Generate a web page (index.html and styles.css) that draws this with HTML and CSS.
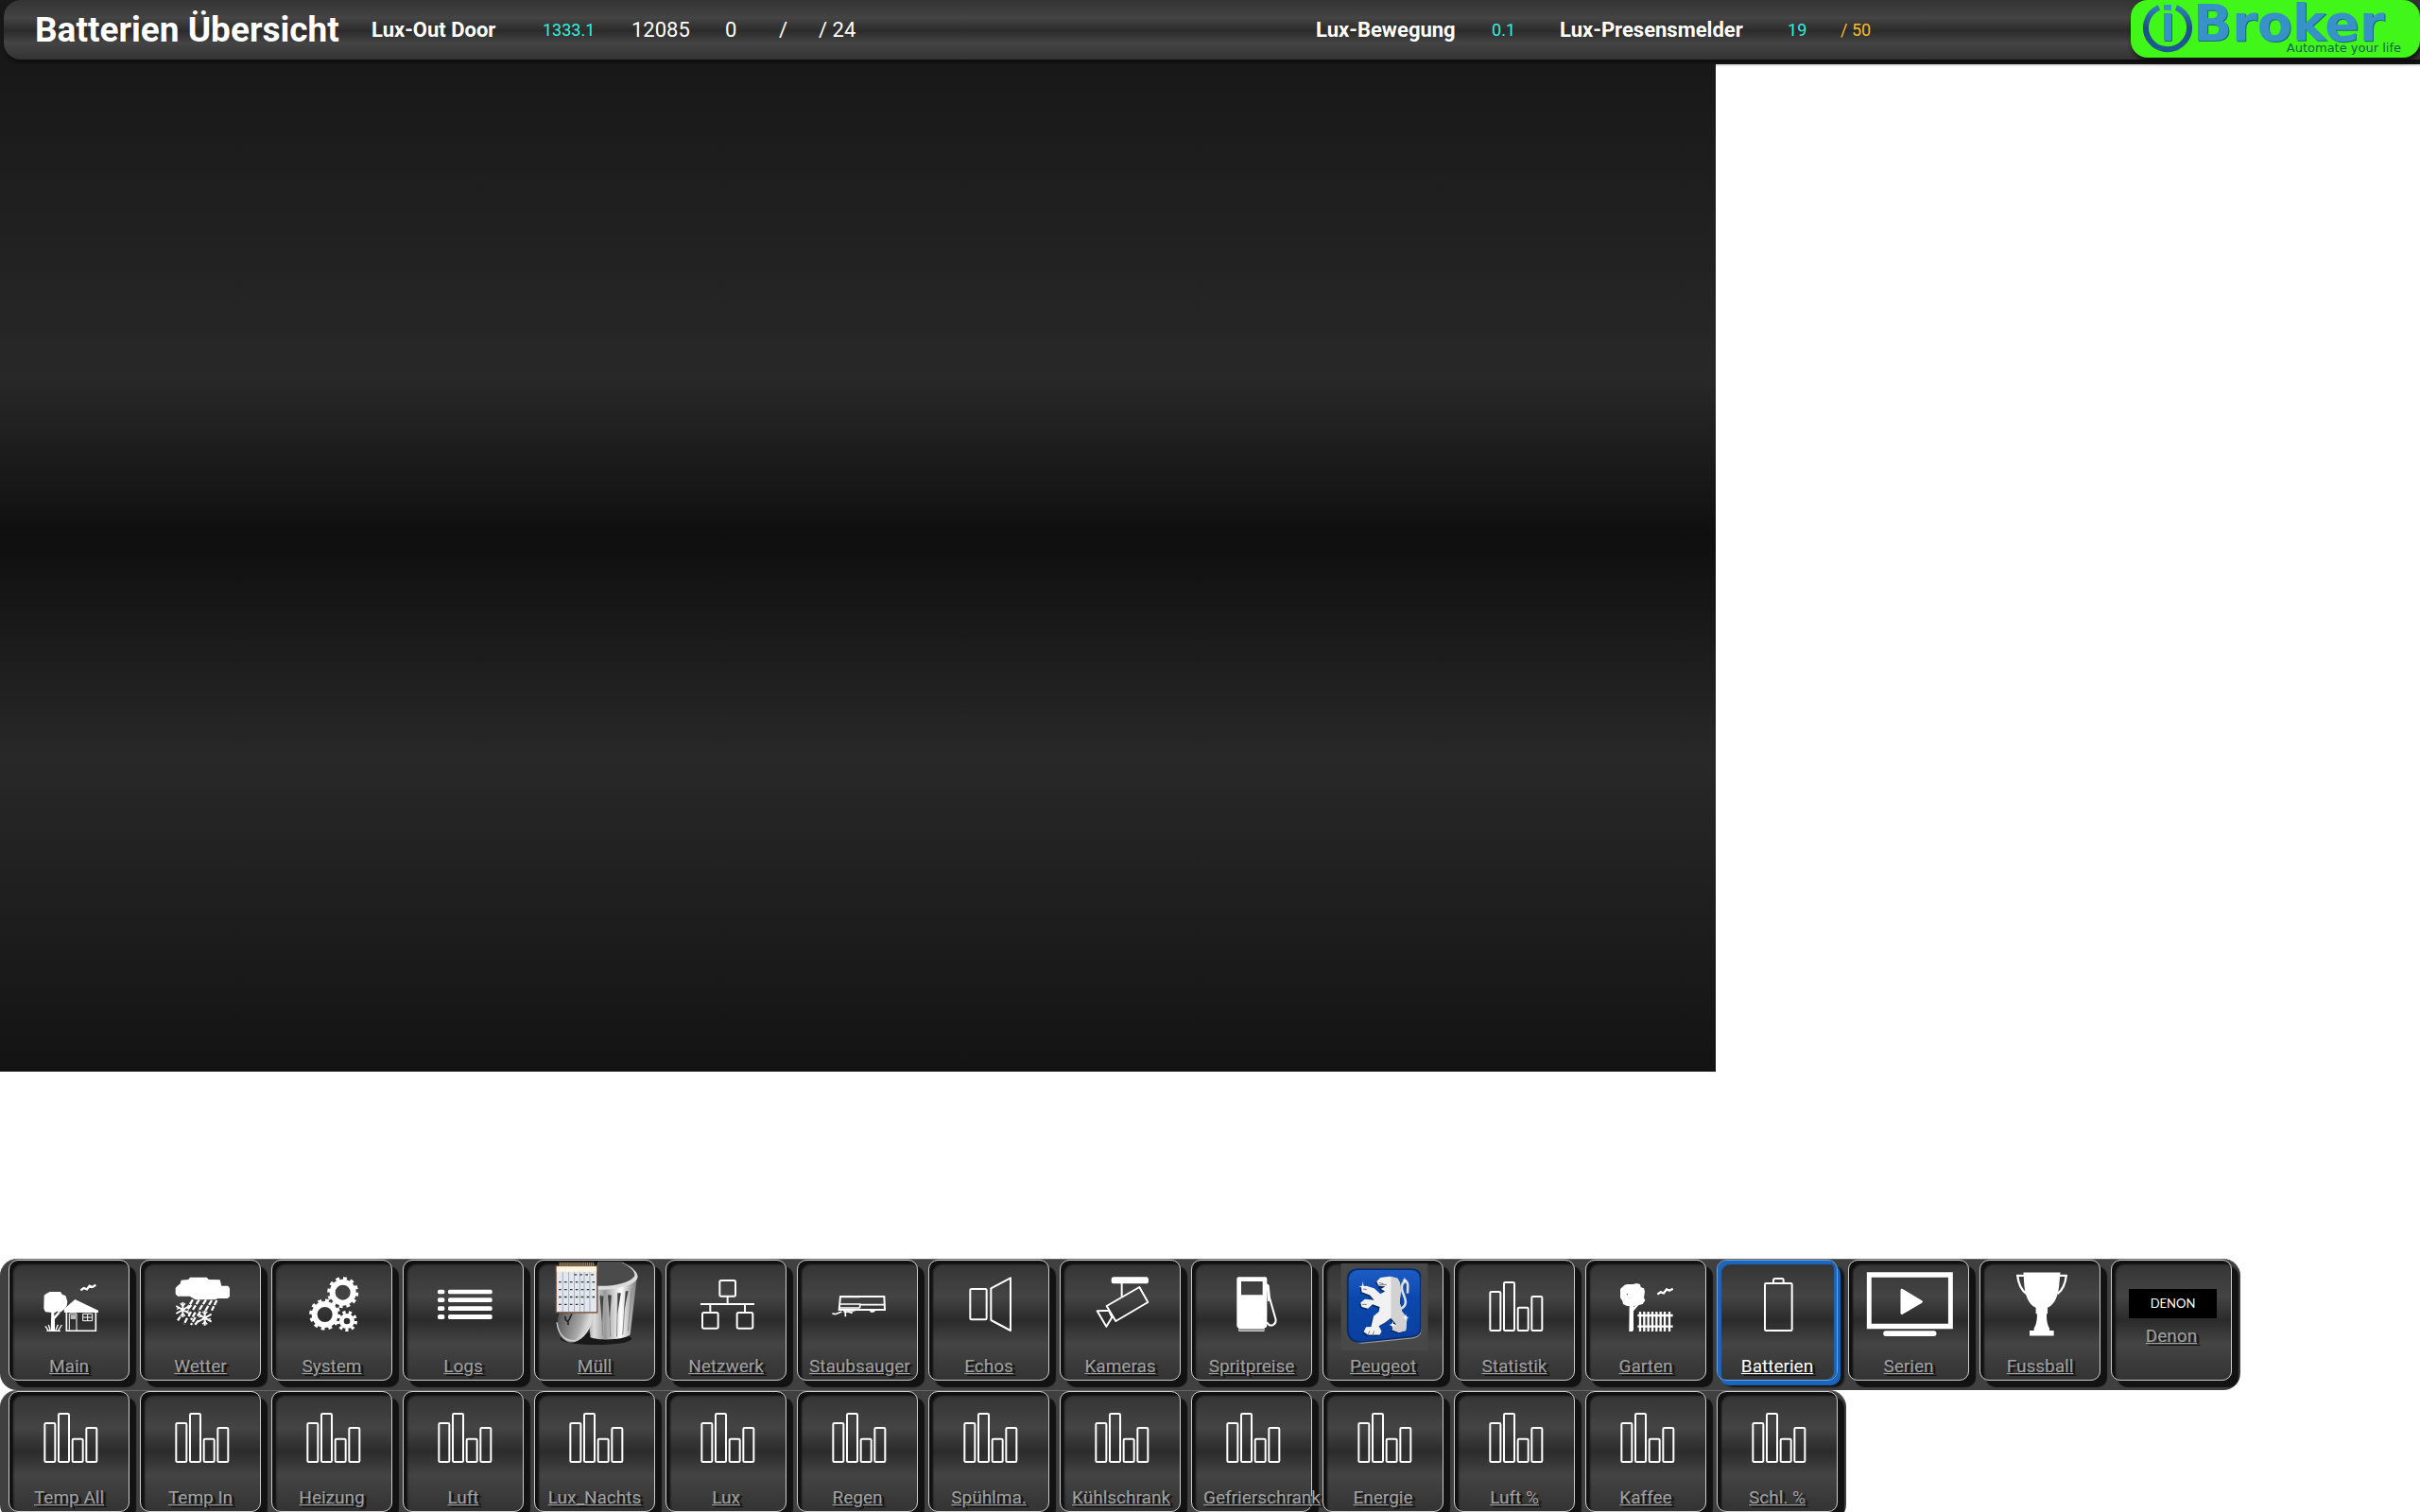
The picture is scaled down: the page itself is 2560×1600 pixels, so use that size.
FILE: index.html
```html
<!DOCTYPE html>
<html lang="de">
<head>
    <meta charset="UTF-8">
    <title>Batterien Übersicht</title>

    <link rel="stylesheet" href="styles.css">
</head>
<body>
    <svg class="symbols" aria-hidden="true">
        <symbol id="bars" viewBox="0 0 174 174">
            <g fill="none" stroke="#fff" stroke-width="6">
                <rect x="4" y="48" width="33" height="123" rx="4"/>
                <rect x="48" y="18" width="33" height="153" rx="4"/>
                <rect x="92" y="98" width="33" height="73" rx="4"/>
                <rect x="136" y="63" width="33" height="108" rx="4"/>
            </g>
        </symbol>
    </svg>

    <header class="header">
        <div class="header-bar">
            <h1>Batterien Übersicht</h1>
            <span class="name">Lux-Out Door</span>
            <span class="lcd">1333.1</span>
            <span>12085</span>
            <span>0</span>
            <span>/</span>
            <span>/ 24</span>
            <span class="name">Lux-Bewegung</span>
            <span class="lcd">0.1</span>
            <span class="name">Lux-Presensmelder</span>
            <span class="lcd">19</span>
            <span class="lcd limit">/ 50</span>
            <div class="logo">
                <svg viewBox="0 0 306 61">
                    <defs>
                        <linearGradient id="ring" x1="0" y1="0" x2="0" y2="1">
                            <stop offset="0" stop-color="#2f7fb5"/>
                            <stop offset="0.5" stop-color="#1d4f86"/>
                            <stop offset="1" stop-color="#1c5a94"/>
                        </linearGradient>
                    </defs>
                    <path d="M30 8A23 23 0 1 0 48 8" fill="none" stroke="url(#ring)" stroke-width="6"/>
                    <rect x="36" y="15" width="8" height="29" fill="#1d6a8e"/>
                    <rect x="35" y="14" width="8" height="29" fill="#3792c8"/>
                    <rect x="35" y="5" width="8" height="6" fill="#3792c8"/>
                    <text class="logo-name" x="66" y="43">Broker</text>
                    <text class="logo-claim" x="286" y="55" text-anchor="end">Automate your life</text>
                </svg>
            </div>
        </div>
    </header>

    <main class="panel"></main>

    <nav class="nav">
        <div class="nav-row">
            <a class="tile" href="#main">
                <svg class="icon" viewBox="138 93 174 174">
                    <g fill="#fff">
                        <path d="M148 146L158 141 192 141 198 150 208 153 214 172 212 186 204 196 194 205 181 203 174 208 144 205 139 195 140 152Z"/>
                        <path d="M163 200H172V218L186 203 192 206 174 228V266H161Z"/>
                        <path d="M203 196L238 165 312 200V207H204Z"/>
                    </g>
                    <path d="M211 204V265H304V204" fill="none" stroke="#fff" stroke-width="5"/>
                    <path d="M220 264V210H243V264M263 211H293V233H263ZM278 211V233M263 222H293" fill="none" stroke="#fff" stroke-width="3"/>
                    <path d="M224 214H240V228H224Z" fill="#bbb"/>
                    <path d="M154 265L144 250M160 265L154 246M168 265L168 247M176 265L184 245M184 265L196 246M148 265H192" stroke="#fff" stroke-width="4"/>
                    <path d="M256 136L266 129 276 133 284 122 293 126 304 119" fill="none" stroke="#fff" stroke-width="7"/>
                </svg>
                <span class="label">Main</span>
            </a>
            <a class="tile" href="#wetter">
                <svg class="icon" viewBox="555 93 174 174">
                    <path d="M560 125L572 115 575 104 598 102 603 95 656 95 662 102 698 103 703 122 724 122 729 130V156L722 162H692L682 166H620L602 155H564L557 148V130Z" fill="#fff"/>
                    <path d="M612 166L598 188M632 166L612 198M654 166L630 202M672 168L650 204M688 168L672 200M596 196L610 180M606 204L598 220M620 206L606 230M594 224L584 244M620 222L606 246M636 204L624 222M572 220L564 232M630 232L618 246" stroke="#fff" stroke-width="7" stroke-dasharray="17 4"/>
                    <g stroke="#fff" stroke-width="6" fill="none">
                        <path d="M580 174V222M559 186L601 210M559 210L601 186"/>
                        <path d="M650 200V248M629 212L671 236M629 236L671 212"/>
                    </g>
                    <g stroke="#fff" stroke-width="4" fill="none">
                        <path d="M572 178L580 186 588 178M572 218L580 210 588 218M561 196L570 192M599 200L590 204"/>
                        <path d="M642 204L650 212 658 204M642 244L650 236 658 244M631 222L640 218M669 226L660 230"/>
                    </g>
                </svg>
                <span class="label">Wetter</span>
            </a>
            <a class="tile" href="#system">
                <svg class="icon" viewBox="972 93 174 174">
                    <g fill="none" stroke="#fff">
                        <circle cx="1088" cy="143" r="33" stroke-width="18"/>
                        <circle cx="1088" cy="143" r="45" stroke-width="9" pathLength="24" stroke-dasharray="1 1"/>
                        <circle cx="1031" cy="213" r="33" stroke-width="18"/>
                        <circle cx="1031" cy="213" r="45" stroke-width="9" pathLength="24" stroke-dasharray="1 1"/>
                        <circle cx="1101" cy="234" r="17" stroke-width="14"/>
                        <circle cx="1101" cy="234" r="28" stroke-width="10" pathLength="18" stroke-dasharray="1 1"/>
                    </g>
                </svg>
                <span class="label">System</span>
            </a>
            <a class="tile" href="#logs">
                <svg class="icon" viewBox="129 93 174 174">
                    <g fill="#fff">
                        <rect x="129" y="134" width="22" height="14" rx="5"/>
                        <rect x="162" y="134" width="140" height="14" rx="5"/>
                        <rect x="129" y="160" width="22" height="14" rx="5"/>
                        <rect x="162" y="160" width="140" height="14" rx="5"/>
                        <rect x="129" y="187" width="22" height="14" rx="5"/>
                        <rect x="162" y="187" width="140" height="14" rx="5"/>
                        <rect x="129" y="213" width="22" height="15" rx="5"/>
                        <rect x="162" y="213" width="140" height="15" rx="5"/>
                    </g>
                </svg>
                <span class="label">Logs</span>
            </a>
            <a class="tile" href="#muell">
                <svg class="picture" viewBox="490 50 280 280">
                    <defs>
                        <linearGradient id="can" x1="0" x2="1">
                            <stop offset="0" stop-color="#777"/>
                            <stop offset="0.2" stop-color="#ddd"/>
                            <stop offset="0.4" stop-color="#999"/>
                            <stop offset="0.7" stop-color="#fff"/>
                            <stop offset="1" stop-color="#777"/>
                        </linearGradient>
                        <linearGradient id="lid" x1="0" x2="1">
                            <stop offset="0" stop-color="#555"/>
                            <stop offset="0.7" stop-color="#aaa"/>
                            <stop offset="1" stop-color="#eee"/>
                        </linearGradient>
                    </defs>
                    <ellipse cx="630" cy="292" rx="115" ry="20" fill="#181818"/>
                    <path d="M590 70L762 95 740 280C715 298 640 298 612 288Z" fill="url(#can)"/>
                    <path d="M636 46H715C748 62 767 80 764 96 755 122 690 138 630 134Z" fill="#ddd"/>
                    <path d="M636 46H712C740 60 757 76 754 90 740 112 690 124 632 122Z" fill="#4b4b4b"/>
                    <path d="M645 150L652 282M672 150L676 286M700 145L697 286M726 138L716 280M745 130L733 268" stroke="#888" stroke-width="3"/>
                    <path d="M642 155L650 240 654 155ZM668 152L674 225 680 152ZM700 145L699 215 710 145ZM726 140L720 205 734 138Z" fill="#444"/>
                    <ellipse cx="562" cy="230" rx="54" ry="76" fill="url(#lid)" transform="rotate(18 562 230)"/>
                    <path d="M504 240C510 290 540 302 565 298 600 270 618 240 618 205" fill="none" stroke="#d0d0d0" stroke-width="4"/>
                    <path d="M530 220C532 238 540 238 544 230L552 212M540 236V248" fill="none" stroke="#222" stroke-width="5"/>
                    <rect x="501" y="58" width="133" height="150" fill="#e4e8ee" stroke="#70482c" stroke-width="4"/>
                    <rect x="503" y="60" width="129" height="16" fill="#fff6df"/>
                    <path d="M512 52H626" stroke="#c7a878" stroke-width="11" stroke-dasharray="3 3"/>
                    <path d="M523 78V206M542 78V206M560 78V206M578 78V206M592 78V206M610 78V206" stroke="#8294aa" stroke-width="2"/>
                    <path d="M560 86H628M510 110H628M510 134H628M510 158H628M510 182H592" stroke="#333" stroke-width="4" stroke-dasharray="8 10"/>
                </svg>
                <span class="label">Müll</span>
            </a>
            <a class="tile" href="#netzwerk">
                <svg class="icon" viewBox="963 93 174 174">
                    <g fill="none" stroke="#fff" stroke-width="6">
                        <rect x="1024" y="105" width="50" height="50" rx="5"/>
                        <rect x="969" y="207" width="50" height="50" rx="5"/>
                        <rect x="1079" y="207" width="50" height="50" rx="5"/>
                        <path d="M1049 155V180M963 180H1134M994 180V207M1104 180V207"/>
                    </g>
                </svg>
                <span class="label">Netzwerk</span>
            </a>
            <a class="tile" href="#staubsauger">
                <svg class="icon" viewBox="121 93 174 174">
                    <path d="M148 156H287L289 198H144Z" fill="none" stroke="#fff" stroke-width="6"/>
                    <path d="M145 180H210V192M210 182H290M146 192H210M148 157H210" fill="none" stroke="#fff" stroke-width="5"/>
                    <path d="M240 200H260L254 206H244ZM156 202H198L180 207H160Z" fill="#fff"/>
                    <path d="M122 210L132 212 152 204M164 202V220M172 204L186 208" fill="none" stroke="#fff" stroke-width="5"/>
                </svg>
                <span class="label">Staubsauger</span>
            </a>
            <a class="tile" href="#echos">
                <svg class="icon" viewBox="537 93 174 174">
                    <g fill="none" stroke="#fff" stroke-width="6" stroke-linejoin="round">
                        <rect x="559" y="132" width="52" height="97" rx="4"/>
                        <path d="M625 130L687 97V264L625 231Z"/>
                    </g>
                </svg>
                <span class="label">Echos</span>
            </a>
            <a class="tile" href="#kameras">
                <svg class="icon" viewBox="955 93 174 174">
                    <rect x="1008" y="94" width="118" height="21" rx="8" fill="#fff"/>
                    <g fill="none" stroke="#fff" stroke-width="6" stroke-linejoin="round">
                        <path d="M1041 112V158M993 186L1097 126 1124 174 1022 234ZM963 202L1000 200 1010 222 992 251Z"/>
                    </g>
                </svg>
                <span class="label">Kameras</span>
            </a>
            <a class="tile" href="#spritpreise">
                <svg class="icon" viewBox="140 93 174 174">
                    <path d="M180 94H264Q270 94 270 100V248Q270 255 262 256V266H180V256Q174 255 174 248V100Q174 94 180 94ZM188 108V151H256V108Z" fill="#fff" fill-rule="evenodd"/>
                    <path d="M182 261H262" stroke="#333" stroke-width="3"/>
                    <path d="M268 118L274 122 278 160 298 230C298 246 284 250 276 246L270 238" fill="none" stroke="#fff" stroke-width="6"/>
                    <path d="M268 118H275V152L282 168 272 172Z" fill="#fff"/>
                </svg>
                <span class="label">Spritpreise</span>
            </a>
            <a class="tile" href="#peugeot">
                <svg class="picture" viewBox="503 50 280 280">
                    <defs>
                        <linearGradient id="blue" x1="0" y1="0" x2="0" y2="1">
                            <stop offset="0" stop-color="#1d5cc4"/>
                            <stop offset="0.4" stop-color="#0b48ae"/>
                            <stop offset="1" stop-color="#0a3f9e"/>
                        </linearGradient>
                    </defs>
                    <rect x="503" y="50" width="280" height="280" fill="#484848"/>
                    <path d="M560 69H730Q762 69 762 100V262Q762 288 734 292L572 308Q548 310 524 274V104Q524 69 560 69Z" fill="#999"/>
                    <path d="M560 66H730Q762 66 762 98V258Q762 284 734 288L568 305Q522 305 522 262V102Q522 66 560 66Z" fill="#072b6e"/>
                    <path d="M562 71H728Q757 71 757 100V256Q757 280 732 283L570 300Q528 300 528 262V106Q528 71 562 71Z" fill="url(#blue)"/>
                    <g transform="translate(-4 4)" fill="#062a63">
                        <path d="M618 108L630 96 660 92 685 98 693 112 696 140 692 175 700 205 716 225 712 266 690 272 668 264 670 252 682 246 664 226 645 240 625 252 634 268 628 280 590 280 576 270 584 255 600 254 608 220 625 205 628 190 605 182 590 195 570 190 566 176 580 165 610 168 596 152 570 142 568 125 585 122 610 130 630 148 645 140 632 132Z"/>
                    </g>
                    <path d="M618 108L630 96 660 92 685 98 693 112 696 140 692 175 700 205 716 225 712 266 690 272 668 264 670 252 682 246 664 226 645 240 625 252 634 268 628 280 590 280 576 270 584 255 600 254 608 220 625 205 628 190 605 182 590 195 570 190 566 176 580 165 610 168 596 152 570 142 568 125 585 122 610 130 630 148 645 140 632 132 646 124 624 122Z" fill="#f1f1f1"/>
                    <path d="M664 92L685 98 693 112 696 140 692 175 700 205 716 225 712 266 690 272 668 264 670 252 682 246 664 226Z" fill="#d2d2d2"/>
                    <path d="M696 196C720 182 710 164 704 148 694 126 700 108 713 108 723 114 716 128 718 146" fill="none" stroke="#ddd" stroke-width="8"/>
                    <path d="M626 112L640 116M622 120L650 118M596 268L590 278M610 268L606 278M572 132L586 134M572 182L586 182" stroke="#777" stroke-width="3"/>
                    <path d="M574 108L576 122 590 124 576 127 574 140 571 127 560 124 571 122ZM670 236L672 245 682 248 672 251 670 260 667 251 658 248 667 245ZM712 212L714 221 723 224 714 226 712 236 709 226 702 224 709 221ZM708 94L710 101 716 104 710 106 708 112 706 106 700 104 706 101Z" fill="#fff"/>
                </svg>
                <span class="label">Peugeot</span>
            </a>
            <a class="tile" href="#statistik">
                <svg class="icon"><use href="#bars"/></svg>
                <span class="label">Statistik</span>
            </a>
            <a class="tile" href="#garten">
                <svg class="icon" viewBox="129 93 174 174">
                    <path d="M142 120L150 117H170L180 114 192 117 194 126 204 130 207 140 204 160 208 168 200 180 186 184 172 186H150L138 180 136 170 129 160V132Z" fill="#fff"/>
                    <path d="M158 180H171V190L182 180 188 182 171 202V262L168 267H157Z" fill="#fff"/>
                    <path d="M184 216H296M184 251H296M192 204V267M205 204V267M218 204V267M231 204V267M244 204V267M257 204V267M270 204V267M285 204V267" stroke="#fff" stroke-width="7"/>
                    <path d="M247 149L257 142 267 145 276 133 285 137 296 131" fill="none" stroke="#fff" stroke-width="7"/>
                    <circle cx="151" cy="149" r="2" fill="#444"/>
                </svg>
                <span class="label">Garten</span>
            </a>
            <a class="tile active" href="#batterien">
                <svg class="icon" viewBox="549 93 174 174">
                    <g fill="none" stroke="#fff" stroke-width="6">
                        <rect x="591" y="114" width="86" height="150" rx="4"/>
                        <path d="M618 113V104Q618 99 624 99H645Q650 99 650 104V113"/>
                    </g>
                </svg>
                <span class="label">Batterien</span>
            </a>
            <a class="tile" href="#serien">
                <svg class="picture" viewBox="911 50 280 280">
                    <path d="M912 78H1189V261H912ZM927 95V244H1174V95Z" fill="#fff" fill-rule="evenodd"/>
                    <path d="M1025 136L1087 173 1025 210Z" fill="#fff" stroke="#fff" stroke-width="9" stroke-linejoin="round"/>
                    <rect x="965" y="267" width="171" height="17" rx="8" fill="#fff"/>
                </svg>
                <span class="label">Serien</span>
            </a>
            <a class="tile" href="#fussball">
                <svg class="picture" viewBox="156 50 280 280">
                    <path d="M238 79H357L354 110C352 150 340 182 316 192V212H313C312 235 316 248 322 259V266H336V283H258V266H272V259C279 248 282 235 282 212H278V192C254 182 242 150 240 110Z" fill="#fff"/>
                    <path d="M240 89H219C222 116 232 136 248 148M355 89H376C373 116 363 136 348 148" fill="none" stroke="#fff" stroke-width="7"/>
                </svg>
                <span class="label">Fussball</span>
            </a>
            <a class="tile" href="#denon">
                <span class="brand">DENON</span>
                <span class="label">Denon</span>
            </a>
        </div>

        <div class="nav-row">
            <a class="tile" href="#temp-all">
                <svg class="icon"><use href="#bars"/></svg>
                <span class="label">Temp All</span>
            </a>
            <a class="tile" href="#temp-in">
                <svg class="icon"><use href="#bars"/></svg>
                <span class="label">Temp In</span>
            </a>
            <a class="tile" href="#heizung">
                <svg class="icon"><use href="#bars"/></svg>
                <span class="label">Heizung</span>
            </a>
            <a class="tile" href="#luft">
                <svg class="icon"><use href="#bars"/></svg>
                <span class="label">Luft</span>
            </a>
            <a class="tile" href="#lux-nachts">
                <svg class="icon"><use href="#bars"/></svg>
                <span class="label">Lux_Nachts</span>
            </a>
            <a class="tile" href="#lux">
                <svg class="icon"><use href="#bars"/></svg>
                <span class="label">Lux</span>
            </a>
            <a class="tile" href="#regen">
                <svg class="icon"><use href="#bars"/></svg>
                <span class="label">Regen</span>
            </a>
            <a class="tile" href="#spuehlma">
                <svg class="icon"><use href="#bars"/></svg>
                <span class="label">Spühlma.</span>
            </a>
            <a class="tile" href="#kuehlschrank">
                <svg class="icon"><use href="#bars"/></svg>
                <span class="label">Kühlschrank</span>
            </a>
            <a class="tile" href="#gefrierschrank">
                <svg class="icon"><use href="#bars"/></svg>
                <span class="label">Gefrierschrank</span>
            </a>
            <a class="tile" href="#energie">
                <svg class="icon"><use href="#bars"/></svg>
                <span class="label">Energie</span>
            </a>
            <a class="tile" href="#luft-prozent">
                <svg class="icon"><use href="#bars"/></svg>
                <span class="label">Luft %</span>
            </a>
            <a class="tile" href="#kaffee">
                <svg class="icon"><use href="#bars"/></svg>
                <span class="label">Kaffee</span>
            </a>
            <a class="tile" href="#schl">
                <svg class="icon"><use href="#bars"/></svg>
                <span class="label">Schl. %</span>
            </a>
        </div>
    </nav>
</body>
</html>
```
FILE: styles.css
```css
* {
    box-sizing: border-box;
}
body {
    margin: 0;
    height: 100vh;
    display: flex;
    flex-direction: column;
    overflow: hidden;
    background-color: #ffffff;
    font-family: Roboto, Arial, sans-serif;
}
.symbols {
    display: none;
}

/* header */
.header {
    background-color: #181818;
    padding: 0 0 5px 4px;
}
.header-bar {
    display: grid;
    grid-template-columns: 356px 181px 94px 99px 57px 42px 12fr 186px 72px 241px 56px 7fr 306px;
    align-items: center;
    height: 63px;
    padding-left: 33px;
    border-radius: 18px 0 0 18px;
    background: linear-gradient(#333333, #444444 30%, #2b2b2b 52%, #444444 72%, #333333);
    box-shadow: 2px 3px 5px #0c0c0c;
    color: #ffffff;
    font-size: 22px;
    white-space: nowrap;
}
h1 {
    margin: 0;
    font-size: 37px;
    font-weight: bold;
}
.name {
    font-weight: bold;
}
.lcd {
    font-size: 18px;
    color: #33eedd;
}
.limit {
    color: #f5bd27;
}
.logo {
    align-self: start;
    height: 61px;
    border-radius: 18px;
    background-color: #41f619;
    box-shadow: 2px 3px 5px #0c0c0c;
}
.logo svg {
    display: block;
    width: 100%;
    height: 61px;
}
.logo-name {
    font-family: "DejaVu Sans", sans-serif;
    font-size: 54px;
    font-weight: bold;
    fill: #3792c8;
    filter: drop-shadow(1px 1px 0 #1a6a7c);
}
.logo-claim {
    font-family: "DejaVu Sans", sans-serif;
    font-size: 13px;
    fill: #17605a;
}

.panel {
    width: 70.9%;
    height: 66.6vh;
    background: linear-gradient(#181818, #282828 31%, #0f0f0f 47%, #282828 69%, #131313);
}

/* navigation */
.nav {
    margin-top: auto;
    margin-bottom: -10px;
}
.nav-row {
    display: flex;
    gap: 11px;
    width: fit-content;
    padding: 0 9px 10px 9px;
    border-top: 1px solid #666666;
    border-radius: 18px;
    background-color: #404040;
    overflow: hidden;
}
.tile {
    display: flex;
    flex-direction: column;
    align-items: safe center;
    width: 128px;
    height: 128px;
    padding: 3px 12px 0;
    border: 1px solid #cccccc;
    border-radius: 10px;
    background: linear-gradient(#333333, #444444 30%, #2b2b2b 50%, #444444 70%, #333333);
    box-shadow: inset 4px 4px 2px #101010, 7px 7px 1px #121212;
    color: #a0a0a0;
    text-decoration: none;
    text-shadow: 3px 2px 1px #101010;
}
.tile.active {
    color: #ffffff;
    border-color: #6fa4dd;
    box-shadow: inset 4px 4px 1px #1b66bd, inset -3px 0 1px #1b66bd, 3px 5px 1px #1b66bd, 7px 7px 2px #121212;
}
.icon {
    flex: none;
    width: 58px;
    height: 58px;
    margin: 14px 0 20px 3px;
}
.picture {
    flex: none;
    width: 93px;
    height: 92px;
    margin-left: 3px;
    overflow: visible;
}
.brand {
    width: 93px;
    margin: 27px 0 2px 3px;
    background-color: #000000;
    color: #ffffff;
    font: 13px/31px Lato, sans-serif;
    text-align: center;
    text-shadow: none;
}
.label {
    margin-top: 5px;
    font-size: 19px;
    line-height: 24px;
    text-decoration: underline;
}
```
